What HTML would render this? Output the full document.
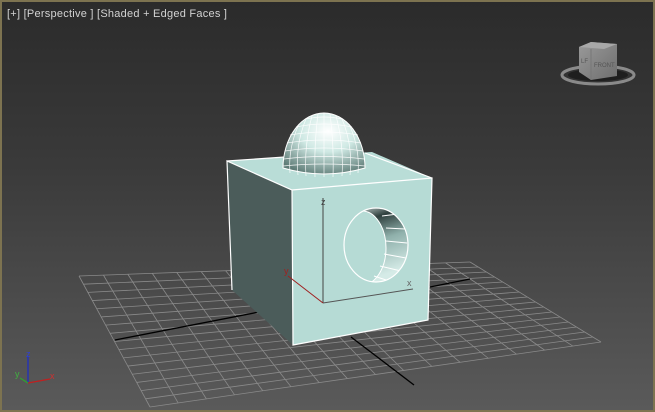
<!DOCTYPE html>
<html><head><style>
html,body{margin:0;padding:0;width:655px;height:412px;overflow:hidden;background:#333;}
#vp{position:absolute;left:0;top:0;width:651px;height:408px;border:2px solid #7d7350;background:linear-gradient(#2b2b2b 0%,#3a3a3a 40%,#5a5a5a 100%);}
#lbl{position:absolute;left:7px;top:8px;font:11px "Liberation Sans",sans-serif;color:#d2d2d2;white-space:pre;letter-spacing:0.25px;}
svg{position:absolute;left:0;top:0;}
</style></head><body>
<div id="vp"></div>
<svg width="655" height="412" viewBox="0 0 655 412">
<defs>
<radialGradient id="dome" cx="0.55" cy="0.3" r="0.75"><stop offset="0" stop-color="#ffffff"/><stop offset="0.45" stop-color="#cfe9e4"/><stop offset="1" stop-color="#5f7c77"/></radialGradient>
<linearGradient id="hole" x1="0" y1="0" x2="0.3" y2="1"><stop offset="0" stop-color="#e8f4f2"/><stop offset="0.25" stop-color="#2f3f3d"/><stop offset="0.55" stop-color="#8fb0ab"/><stop offset="1" stop-color="#d5ebe7"/></linearGradient>
<linearGradient id="vc" x1="0" y1="0" x2="1" y2="1"><stop offset="0" stop-color="#9a9a9a"/><stop offset="1" stop-color="#6e6e6e"/></linearGradient>
<clipPath id="hc"><ellipse cx="376" cy="245" rx="32" ry="37"/></clipPath>
</defs>
<g id="grid" stroke="#8a8a8a" stroke-width="0.8" fill="none"></g>
<g stroke="#000" stroke-width="1.3">
<line x1="115" y1="340" x2="259" y2="312"/>
<line x1="430" y1="287" x2="470" y2="279"/>
<line x1="351" y1="337" x2="414" y2="385"/>
</g>
<polygon points="227,161 292,190 293,345 232,290" fill="#4b5c5a"/>
<polygon points="227,161 372,152 432,178 292,190" fill="#b9ddd7"/>
<polygon points="292,190 432,178 428,320 293,345" fill="#b6dbd5"/>
<g stroke="#fff" stroke-width="1.2" fill="none">
<polyline points="232,290 227,161 292,190 432,178 428,320 293,345 292,190"/>
<line x1="227" y1="161" x2="285" y2="157"/><line x1="365" y1="153" x2="432" y2="178"/>
</g>
<ellipse cx="376" cy="245" rx="32" ry="37" fill="url(#hole)"/>
<g clip-path="url(#hc)">
<ellipse cx="362" cy="248" rx="24" ry="37" fill="#b6dbd5" stroke="#fff" stroke-width="1"/>
<path d="M382,216 L398,214 M386,228 L405,229 M386,241 L407,243 M384,254 L406,258 M380,266 L401,271 M374,276 L392,282" stroke="#fff" stroke-width="1" fill="none"/>
</g>
<ellipse cx="376" cy="245" rx="32" ry="37" fill="none" stroke="#fff" stroke-width="1.2"/>
<path d="M283,168 A41,55 0 0 1 365,168 Q324,180 283,168 Z" fill="url(#dome)" stroke="#fff" stroke-width="1"/>
<g stroke="#fff" stroke-width="0.7" fill="none" opacity="0.9">
<path d="M306,119 Q324,115 342,119 M296,127 Q324,121 352,127 M290,135 Q324,129 358,135 M287,143 Q324,137 361,143 M285,151 Q324,145 363,151 M284,159 Q324,154 364,159 M283,166 Q324,162 365,166"/>
<path d="M324,113 V177 M318,114 Q314,145 315,177 M330,114 Q334,145 333,177 M312,116 Q304,145 306,176 M336,116 Q344,145 342,176 M306,119 Q295,145 298,175 M342,119 Q353,145 350,175 M299,124 Q288,148 290,173 M349,124 Q360,148 358,173"/>
</g>
<g stroke-width="1">
<line x1="323" y1="303" x2="323" y2="198" stroke="#444"/>
<line x1="323" y1="303" x2="413" y2="289" stroke="#555"/>
<line x1="323" y1="303" x2="288" y2="276" stroke="#a02020"/>
</g>
<text x="321" y="205" font-family="Liberation Sans" font-size="9" fill="#444">z</text>
<text x="407" y="286" font-family="Liberation Sans" font-size="9" fill="#666">x</text>
<text x="284" y="274" font-family="Liberation Sans" font-size="9" fill="#a02020">y</text>
<line x1="28" y1="383" x2="28" y2="356" stroke="#2030c0" stroke-width="1.3"/>
<line x1="28" y1="383" x2="50" y2="379" stroke="#c02020" stroke-width="1.3"/>
<line x1="28" y1="383" x2="20" y2="378" stroke="#30a030" stroke-width="1.3"/>
<text x="26" y="357" font-family="Liberation Sans" font-size="9" fill="#3040d0">z</text>
<text x="50" y="379" font-family="Liberation Sans" font-size="9" fill="#d03030">x</text>
<text x="15" y="377" font-family="Liberation Sans" font-size="9" fill="#40b040">y</text>
<ellipse cx="598" cy="75" rx="36" ry="9" fill="none" stroke="#8a8a8a" stroke-width="3"/>
<ellipse cx="598" cy="75" rx="30" ry="6" fill="#1e1e1e"/>
<polygon points="579,47 591,42 617,44 617,76 591,80 579,72" fill="url(#vc)"/>
<polygon points="579,47 591,42 617,44 604,49" fill="#a8a8a8"/>
<line x1="591" y1="49" x2="591" y2="80" stroke="#777"/>
<text x="594" y="67" font-family="Liberation Sans" font-size="6" fill="#555">FRONT</text>
<text x="581" y="63" font-family="Liberation Sans" font-size="6" fill="#555">LF</text>
</svg>
<div id="lbl">[+] [Perspective ] [Shaded + Edged Faces ]</div>
<script>
var A=[79,276],B=[470,262],C=[601,342],D=[150,407],n=16,g=document.getElementById('grid'),s='';
function P(u,v){return [(A[0]*(1-u)+B[0]*u)*(1-v)+(D[0]*(1-u)+C[0]*u)*v,(A[1]*(1-u)+B[1]*u)*(1-v)+(D[1]*(1-u)+C[1]*u)*v];}
for(var i=0;i<=n;i++){var t=i/n,a=P(t,0),b=P(t,1),c=P(0,t),d=P(1,t);
s+='<line x1="'+a[0]+'" y1="'+a[1]+'" x2="'+b[0]+'" y2="'+b[1]+'"/><line x1="'+c[0]+'" y1="'+c[1]+'" x2="'+d[0]+'" y2="'+d[1]+'"/>';}
g.innerHTML=s;
</script>
</body></html>
